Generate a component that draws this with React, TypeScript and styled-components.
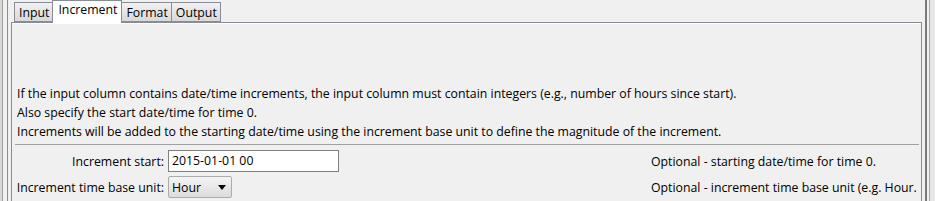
import React from "react";
import styled, { createGlobalStyle } from "styled-components";

const Global = createGlobalStyle`
  html, body { margin: 0; padding: 0; background: #f0f0f0; }
  body { font-family: "Open Sans", "Liberation Sans", Arial, sans-serif; font-size: 12.3px; color: #000; }
`;

const Page = styled.div`
  display: flex;
  width: 935px;
  height: 201px;
  overflow: hidden;
  background: #f0f0f0;
`;

const LeftRail = styled.div`
  width: 11px;
  flex: none;
  background: linear-gradient(
    to right,
    #d8d8d8 0px, #d8d8d8 2px,
    #a0a0a0 2px, #a0a0a0 3px,
    #f0f0f0 3px, #f0f0f0 7px,
    #8c8c8c 7px, #8c8c8c 8px,
    #f0f0f0 8px
  );
`;

const RightRail = styled.div`
  width: 13px;
  flex: none;
  background: linear-gradient(
    to right,
    #f0f0f0 0px, #f0f0f0 3px,
    #7a7a7a 3px, #7a7a7a 5px,
    #f0f0f0 5px, #f0f0f0 7px,
    #a8a8a8 7px, #a8a8a8 8px,
    #e6e6e6 8px
  );
`;

const Main = styled.div`
  flex: 1;
  display: flex;
  flex-direction: column;
  min-width: 0;
`;

const TabStrip = styled.div`
  height: 22px;
  display: flex;
  align-items: flex-end;
  padding-left: 3px;
  flex: none;
`;

const Tab = styled.div<{ $active?: boolean }>`
  box-sizing: border-box;
  height: ${(p) => (p.$active ? "23px" : "20px")};
  margin-bottom: ${(p) => (p.$active ? "-1px" : "0")};
  padding: ${(p) => (p.$active ? "1px 4px 0 5px" : "2px 3px 0 4px")};
  border: 1px solid #898c95;
  border-bottom: ${(p) => (p.$active ? "none" : "1px solid #898c95")};
  background: ${(p) =>
    p.$active ? "#ffffff" : "linear-gradient(#f2f2f2, #e4e4e4 50%, #d9d9d9)"};
  margin-left: -1px;
  position: relative;
  z-index: ${(p) => (p.$active ? 2 : 1)};
  line-height: 16px;
  white-space: nowrap;
  &:first-child { margin-left: 0; }
`;

const Panel = styled.div`
  flex: 1;
  border: 1px solid #898c95;
  border-bottom: none;
  box-shadow: inset 0 1px 0 #ffffff;
  padding-top: 61px;
  overflow: hidden;
`;

const TextLine = styled.div`
  padding-left: 5px;
  line-height: 19px;
  white-space: nowrap;
`;

const Separator = styled.div`
  height: 1px;
  margin: 3px 2px 0 3px;
  background: #a0a0a0;
`;

const FormGrid = styled.div`
  margin-top: 5px;
  display: grid;
  grid-template-columns: 152px 171px 1fr 270px;
  column-gap: 4px;
  row-gap: 4px;
  grid-auto-rows: 22px;
  align-items: center;
`;

const Label = styled.div`
  text-align: right;
  white-space: nowrap;
`;

const TextInput = styled.div`
  box-sizing: border-box;
  height: 22px;
  border: 1px solid #7f7f7f;
  background: #fff;
  padding: 0 3px;
  line-height: 20px;
`;

const Select = styled.div`
  box-sizing: border-box;
  width: 64px;
  height: 22px;
  border: 1px solid #acacac;
  border-radius: 2px;
  background: linear-gradient(#f4f4f4, #e8e8e8 50%, #dcdcdc);
  display: flex;
  align-items: center;
  justify-content: space-between;
  padding: 0 5px 0 3px;
`;

const Arrow = styled.span`
  width: 0;
  height: 0;
  border-left: 4px solid transparent;
  border-right: 4px solid transparent;
  border-top: 5px solid #000;
`;

const Spacer = styled.div``;

const Note = styled.div`
  white-space: nowrap;
  overflow: hidden;
`;

export default function App() {
  return (
    <>
      <Global />
      <Page>
        <LeftRail />
        <Main>
          <TabStrip>
            <Tab>Input</Tab>
            <Tab $active>Increment</Tab>
            <Tab>Format</Tab>
            <Tab>Output</Tab>
          </TabStrip>
          <Panel>
            <TextLine>
              If the input column contains date/time increments, the input column must contain integers (e.g., number of hours since start).
            </TextLine>
            <TextLine>Also specify the start date/time for time 0.</TextLine>
            <TextLine>
              Increments will be added to the starting date/time using the increment base unit to define the magnitude of the increment.
            </TextLine>
            <Separator />
            <FormGrid>
              <Label>Increment start:</Label>
              <TextInput>2015-01-01 00</TextInput>
              <Spacer />
              <Note>Optional - starting date/time for time 0.</Note>
              <Label>Increment time base unit:</Label>
              <div>
                <Select>
                  <span>Hour</span>
                  <Arrow />
                </Select>
              </div>
              <Spacer />
              <Note>Optional - increment time base unit (e.g. Hour.</Note>
            </FormGrid>
          </Panel>
        </Main>
        <RightRail />
      </Page>
    </>
  );
}
